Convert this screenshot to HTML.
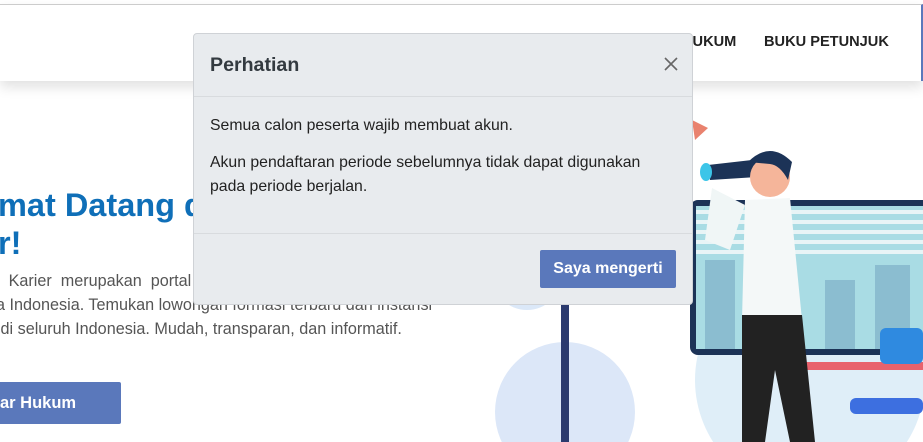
<!DOCTYPE html>
<html><head><meta charset="utf-8"><style>
html,body{margin:0;width:923px;height:442px;overflow:hidden}
body{background:#fff;font-family:"Liberation Sans",Arial,sans-serif;position:relative}
.hdr{position:absolute;left:0;top:4px;width:921px;height:76px;background:#fff;border-top:1px solid #ccc;border-right:2px solid #5a78bb;box-shadow:0 6px 12px rgba(0,0,0,.12);z-index:2}
.nav{position:absolute;top:29px;font-size:14.6px;font-weight:bold;color:#222}
h1{position:absolute;left:-2px;top:186px;margin:0;font-size:32.5px;line-height:38px;color:#0f6fb8;font-weight:bold}
.p{position:absolute;left:-4px;top:269px;font-size:16.2px;line-height:24px;color:#555;white-space:nowrap}
.btn1{position:absolute;left:-10px;top:382px;width:131px;height:42px;background:#5a78bb;color:#fff;font-weight:bold;font-size:16.5px;line-height:42px;padding-left:10px;box-sizing:border-box;border-radius:2px}
.modal{position:absolute;left:193px;top:33px;width:498px;height:270px;background:#e8ebee;border:1px solid #cfd2d6;border-radius:4px;z-index:5}
.mt{position:absolute;left:16px;top:20px;font-size:19.6px;font-weight:bold;color:#333a40}
.x{position:absolute;right:14px;top:23px}
.d1{position:absolute;left:0;right:0;top:62px;border-top:1px solid #d8dbde}
.d2{position:absolute;left:0;right:0;top:199px;border-top:1px solid #d8dbde}
.mb{position:absolute;left:16px;top:80px;font-size:15.8px;color:#222;line-height:24px}
.mb p{margin:0 0 13px}
.btn2{position:absolute;left:346px;top:216px;width:136px;height:38px;background:#5a78bb;color:#fff;font-weight:bold;font-size:16px;line-height:38px;text-align:center;border-radius:2px}
</style></head><body>
<div class="hdr"><span class="nav" style="left:682px">HUKUM</span><span class="nav" style="left:764px">BUKU PETUNJUK</span></div>
<h1>mat Datang di<br>r!</h1>
<div class="p">l&nbsp; Karier&nbsp; merupakan&nbsp; portal<br>a Indonesia. Temukan lowongan formasi terbaru dan instansi<br>&nbsp;di seluruh Indonesia. Mudah, transparan, dan informatif.</div>
<div class="btn1">ar Hukum</div>
<svg style="position:absolute;left:480px;top:80px" width="443" height="362">
<circle cx="47" cy="195" r="35" fill="#dbe8f8"/>
<circle cx="85" cy="332" r="70" fill="#dce7f8"/>
<rect x="81" y="190" width="8" height="172" fill="#2b3a6e"/>
<circle cx="330" cy="300" r="115" fill="#dfeef8"/>
<path d="M212 40 L228 48 L215 60 Z" fill="#e9826e"/>
<rect x="210" y="120" width="240" height="155" rx="8" fill="#1c3357"/>
<rect x="216" y="126" width="230" height="143" fill="#a9dce4"/>
<g fill="#e8f4f6"><rect x="216" y="130" width="230" height="4"/><rect x="216" y="140" width="230" height="4"/><rect x="216" y="150" width="230" height="4"/><rect x="216" y="160" width="230" height="4"/><rect x="216" y="170" width="230" height="4"/></g>
<g fill="#8bbdd0"><rect x="225" y="180" width="30" height="89"/><rect x="345" y="200" width="30" height="69"/><rect x="395" y="185" width="35" height="84"/></g>
<rect x="290" y="282" width="153" height="8" fill="#e8626d"/>
<rect x="400" y="248" width="43" height="36" rx="6" fill="#2f8ae0"/>
<rect x="370" y="318" width="73" height="16" rx="6" fill="#3d6fe0"/>
<path d="M228 85 L290 78 L292 96 L230 100 Z" fill="#1c3357"/>
<ellipse cx="226" cy="92" rx="6" ry="9" fill="#3cc5e8"/>
<circle cx="290" cy="97" r="20" fill="#f5b59a"/>
<path d="M268 82 Q290 60 312 82 L308 100 Q300 85 290 84 Z" fill="#1c3357"/>
<path d="M265 120 L310 118 L322 240 L262 240 Z" fill="#f4f8f8"/>
<path d="M232 108 L265 125 L250 170 L225 160 Z" fill="#f0f6f6"/>
<path d="M262 235 L322 235 L335 362 L310 362 L295 290 L285 362 L262 362 Z" fill="#222"/>
</svg>
<div class="modal">
<div class="mt">Perhatian</div>
<svg class="x" width="14" height="14"><path d="M1 1L13 13M13 1L1 13" stroke="#666" stroke-width="1.6"/></svg>
<div class="d1"></div>
<div class="mb"><p>Semua calon peserta wajib membuat akun.</p><p>Akun pendaftaran periode sebelumnya tidak dapat digunakan<br>pada periode berjalan.</p></div>
<div class="d2"></div>
<div class="btn2">Saya mengerti</div>
</div>
</body></html>
